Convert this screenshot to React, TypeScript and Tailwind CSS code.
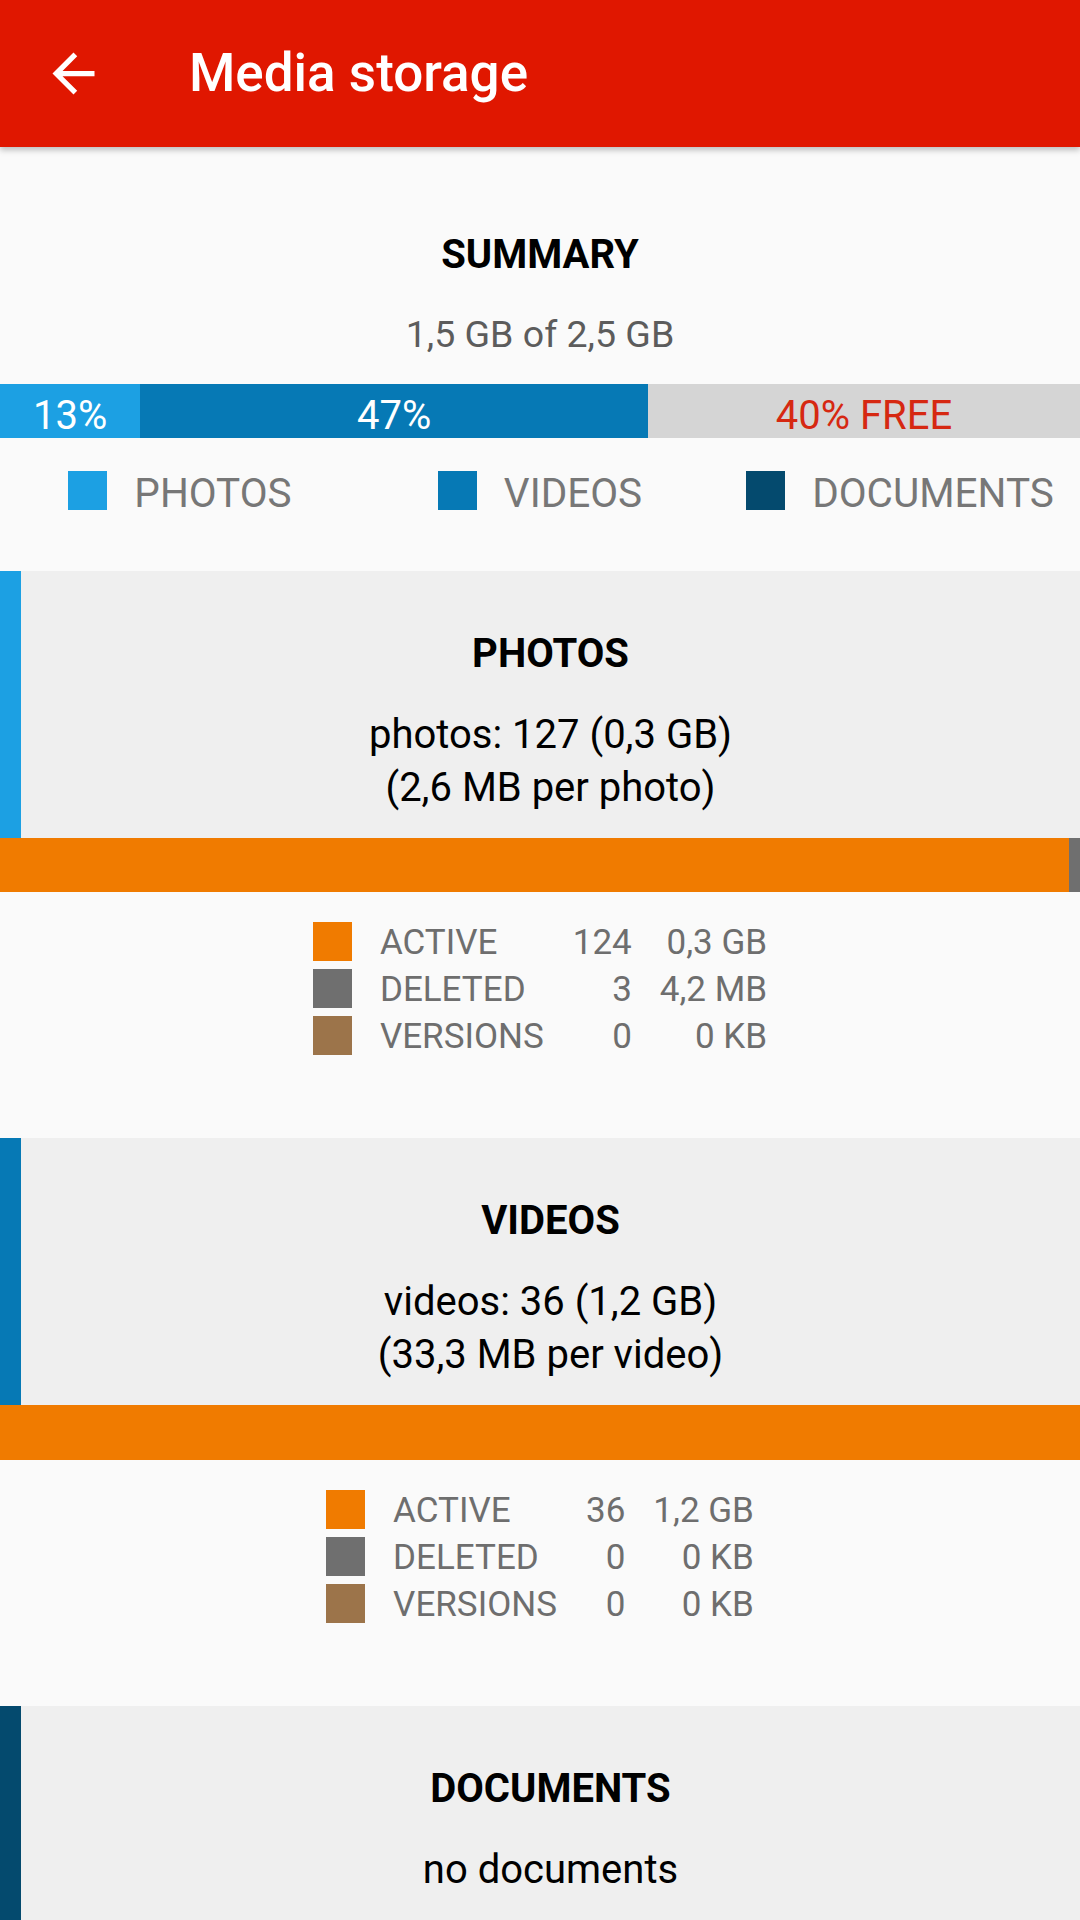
import { ArrowLeft } from "lucide-react";

const font = { fontFamily: "Roboto, 'Noto Sans', sans-serif" };

type Row = { label: string; color: string; count: string; size: string };

const photoRows: Row[] = [
  { label: "ACTIVE", color: "bg-[#f07b00]", count: "124", size: "0,3 GB" },
  { label: "DELETED", color: "bg-[#6f6f6f]", count: "3", size: "4,2 MB" },
  { label: "VERSIONS", color: "bg-[#9c744a]", count: "0", size: "0 KB" },
];

const videoRows: Row[] = [
  { label: "ACTIVE", color: "bg-[#f07b00]", count: "36", size: "1,2 GB" },
  { label: "DELETED", color: "bg-[#6f6f6f]", count: "0", size: "0 KB" },
  { label: "VERSIONS", color: "bg-[#9c744a]", count: "0", size: "0 KB" },
];

function BreakdownTable({ rows }: { rows: Row[] }) {
  return (
    <div className="flex justify-center pt-[30px] pb-[83px]">
      <div className="grid grid-cols-[39px_auto_auto_auto] grid-rows-[39px_39px_39px] gap-x-[28px] gap-y-[8px] items-center text-[35px] leading-[37px] text-[#6e6e6e]">
        {rows.map((r) => (
          <div key={r.label} className="contents">
            <div className={`h-[39px] w-[39px] ${r.color}`} />
            <div className="pr-[1px] pt-[2px]">{r.label}</div>
            <div className="text-right pt-[2px]">{r.count}</div>
            <div className="text-right pt-[2px]">{r.size}</div>
          </div>
        ))}
      </div>
    </div>
  );
}

function CategoryHeader({
  title,
  lines,
  strip,
}: {
  title: string;
  lines: string[];
  strip: string;
}) {
  return (
    <div className="flex bg-[#efefef]">
      <div className={`w-[21px] shrink-0 ${strip}`} />
      <div className="flex-1 flex flex-col items-center pt-[59px] pb-[24px] text-black">
        <div className="text-[40px] leading-[48px] font-bold">{title}</div>
        <div className="mt-[30px] flex flex-col items-center text-[40px] leading-[53px]">
          {lines.map((l) => (
            <div key={l}>{l}</div>
          ))}
        </div>
      </div>
    </div>
  );
}

export default function App() {
  return (
    <div className="min-h-screen w-[1080px] bg-[#fafafa] overflow-hidden" style={font}>
      <header className="relative z-10 flex h-[147px] items-center bg-[#e01700] shadow-[0_3px_6px_rgba(0,0,0,0.25)]">
        <div className="ml-[42px] flex h-[63px] w-[63px] items-center justify-center text-white">
          <svg viewBox="0 0 24 24" className="h-[63px] w-[63px]" fill="currentColor">
            <path d="M20 11H7.83l5.59-5.59L12 4l-8 8 8 8 1.41-1.41L7.83 13H20v-2z" />
          </svg>
        </div>
        <h1 className="ml-[84px] text-[53px] font-medium text-white leading-none">Media storage</h1>
      </header>

      <section className="flex flex-col items-center pt-[84px] pb-[61px]">
        <div className="text-[40px] leading-[48px] font-bold text-black">SUMMARY</div>
        <div className="mt-[31px] text-[37.5px] leading-[48px] text-[#5c5c5c]">1,5 GB of 2,5 GB</div>
        <div className="mt-[26px] flex h-[54px] w-full text-[40px] leading-none">
          <div className="flex w-[13%] items-center justify-center bg-[#1ca0e3] pt-[9px] text-white">13%</div>
          <div className="flex w-[47%] items-center justify-center bg-[#0679b5] pt-[9px] text-white">47%</div>
          <div className="flex flex-1 items-center justify-center bg-[#d5d5d5] pt-[9px] text-[#d62811]">40% FREE</div>
        </div>
        <div className="mt-[33px] grid h-[39px] w-full grid-cols-3 text-[40.5px] text-[#777777]">
          {[
            { label: "PHOTOS", color: "bg-[#1ca0e3]" },
            { label: "VIDEOS", color: "bg-[#0679b5]" },
            { label: "DOCUMENTS", color: "bg-[#044a6e]" },
          ].map((l) => (
            <div key={l.label} className="flex h-[39px] items-center justify-center gap-[27px]">
              <div className={`h-[39px] w-[39px] ${l.color}`} />
              <div className="h-[39px] pt-[5px] leading-[34px]">{l.label}</div>
            </div>
          ))}
        </div>
      </section>

      <CategoryHeader
        title="PHOTOS"
        strip="bg-[#1ca0e3]"
        lines={["photos: 127 (0,3 GB)", "(2,6 MB per photo)"]}
      />
      <div className="flex h-[54px]">
        <div className="flex-1 bg-[#f07b00]" />
        <div className="w-[11px] bg-[#6f6f6f]" />
      </div>
      <BreakdownTable rows={photoRows} />

      <CategoryHeader
        title="VIDEOS"
        strip="bg-[#0679b5]"
        lines={["videos: 36 (1,2 GB)", "(33,3 MB per video)"]}
      />
      <div className="h-[55px] bg-[#f07b00]" />
      <BreakdownTable rows={videoRows} />

      <CategoryHeader title="DOCUMENTS" strip="bg-[#044a6e]" lines={["no documents"]} />
    </div>
  );
}
